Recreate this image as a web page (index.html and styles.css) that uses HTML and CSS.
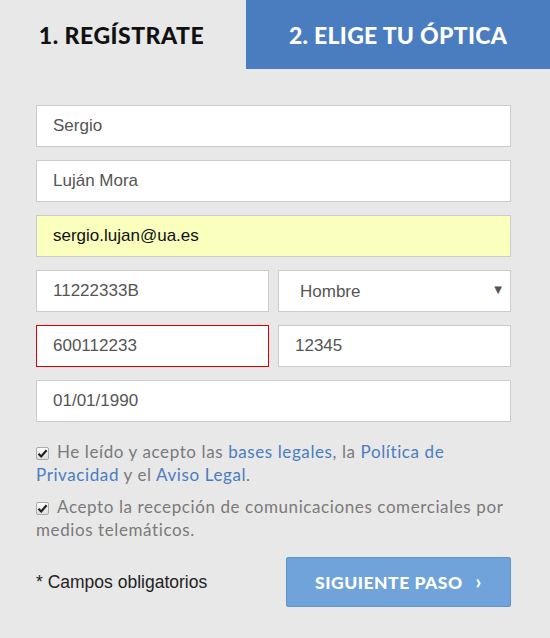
FILE: index.html
```html
<!DOCTYPE html>
<html lang="es">
<head>
<meta charset="utf-8">
<title>Registro</title>
<link rel="stylesheet" href="styles.css">
</head>
<body>
<div class="page">
  <div class="tabs">
    <div class="tab tab-active">1. REGÍSTRATE</div>
    <div class="tab tab-next">2. ELIGE TU ÓPTICA</div>
  </div>
  <form class="form">
    <input class="field" type="text" value="Sergio">
    <input class="field" type="text" value="Luján Mora">
    <input class="field field-autofill" type="text" value="sergio.lujan@ua.es">
    <div class="row">
      <input class="field" type="text" value="11222333B">
      <div class="select-wrap">
        <select class="field select"><option>Hombre</option></select>
        <span class="arrow">▼</span>
      </div>
    </div>
    <div class="row">
      <input class="field field-error" type="text" value="600112233">
      <input class="field" type="text" value="12345">
    </div>
    <input class="field" type="text" value="01/01/1990">
    <div class="checks">
      <p class="check"><span class="box"><svg width="11" height="11" viewBox="0 0 11 11"><path d="M1.5 5.8 L4.2 8.5 L9.6 2.3" fill="none" stroke="#222" stroke-width="2.2"/></svg></span>He leído y acepto las <a href="#">bases legales</a>, la <a href="#">Política de Privacidad</a> y el <a href="#">Aviso Legal</a>.</p>
      <p class="check"><span class="box"><svg width="11" height="11" viewBox="0 0 11 11"><path d="M1.5 5.8 L4.2 8.5 L9.6 2.3" fill="none" stroke="#222" stroke-width="2.2"/></svg></span>Acepto la recepción de comunicaciones comerciales por medios telemáticos.</p>
    </div>
    <div class="footer">
      <span class="required">* Campos obligatorios</span>
      <button class="next" type="button">SIGUIENTE PASO<span class="chev">›</span></button>
    </div>
  </form>
</div>
</body>
</html>
```
FILE: styles.css
```css
html, body {
  margin: 0;
  padding: 0;
  background: #e8e8e8;
}
.page {
  width: 550px;
  height: 638px;
  background: #e8e8e8;
}
.tabs {
  display: flex;
  height: 69px;
}
.tab {
  display: flex;
  align-items: center;
  justify-content: center;
  font-family: "Lato", sans-serif;
  font-weight: 900;
  font-size: 23px;
  letter-spacing: 0.5px;
}
.tab-active {
  width: 246px;
  color: #111;
  padding-right: 3px;
  box-sizing: border-box;
}
.tab-next {
  flex: 1;
  background: #4a7dbf;
  color: #fff;
  letter-spacing: 0.3px;
}
.form {
  padding: 36px 39px 0 36px;
  display: flex;
  flex-direction: column;
  gap: 13px;
}
.field {
  box-sizing: border-box;
  width: 100%;
  height: 42px;
  margin: 0;
  border: 1px solid #cccccc;
  background: #fff;
  padding: 0 16px;
  font-family: "Liberation Sans", Arial, sans-serif;
  font-size: 17px;
  color: #555;
  outline: none;
  border-radius: 0;
}
.field-autofill {
  background: #faffbd;
  color: #111;
}
.field-error {
  border-color: #e00000;
}
.row {
  display: flex;
  gap: 9px;
}
.row > .field {
  flex: 0 0 233px;
}
.select-wrap {
  position: relative;
  flex: 1;
}
.select {
  appearance: none;
  -webkit-appearance: none;
  padding-left: 21px;
}
.arrow {
  position: absolute;
  right: 9px;
  top: 14px;
  font-size: 10px;
  color: #555;
  pointer-events: none;
  font-family: "DejaVu Sans", sans-serif;
}
.checks {
  display: flex;
  flex-direction: column;
  gap: 9px;
  margin-top: 5px;
}
.check {
  margin: 0;
  font-family: "Lato", sans-serif;
  font-size: 17px;
  letter-spacing: 0.6px;
  line-height: 23px;
  color: #7a7a7a;
}
.check a {
  color: #4a7dbf;
  text-decoration: none;
}
.box {
  display: inline-flex;
  align-items: center;
  justify-content: center;
  box-sizing: border-box;
  width: 13px;
  height: 13px;
  border: 1px solid #aaa;
  border-radius: 2px;
  background: linear-gradient(#fdfdfd, #dcdcdc);
  margin-right: 8px;
  vertical-align: -1px;
}
.box svg {
  display: block;
}
.footer {
  display: flex;
  align-items: center;
  justify-content: space-between;
  margin-top: 3px;
}
.required {
  font-family: "Liberation Sans", Arial, sans-serif;
  font-size: 17.5px;
  color: #222;
}
.next {
  width: 225px;
  height: 50px;
  background: #6fa3d9;
  border: 1px solid #5d95d3;
  border-radius: 2px;
  color: #fff;
  font-family: "Lato", sans-serif;
  font-weight: 900;
  font-size: 17.5px;
  letter-spacing: 0.5px;
  display: flex;
  align-items: center;
  justify-content: center;
  padding: 0;
}
.chev {
  margin-left: 13px;
  font-size: 20px;
  font-weight: 700;
  line-height: 1;
  position: relative;
  top: -1px;
}
```
